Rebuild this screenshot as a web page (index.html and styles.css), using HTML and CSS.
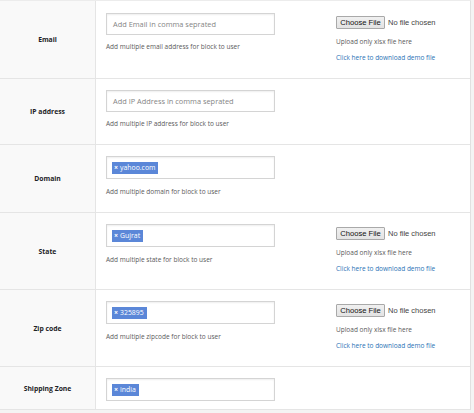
FILE: index.html
```html
<!DOCTYPE html>
<html>
<head>
<meta charset="utf-8">
<link rel="stylesheet" href="styles.css">
</head>
<body>
<div class="table">
  <div class="row row-file row-first">
    <div class="th">Email</div>
    <div class="td">
      <div class="field">
        <div class="input"><span class="ph">Add Email in comma seprated</span></div>
        <p class="help">Add multiple email address for block to user</p>
      </div>
      <div class="file">
        <div class="picker"><span class="btn">Choose File</span><span class="none">No file chosen</span></div>
        <p class="note">Upload only xlsx file here</p>
        <a class="link" href="#">Click here to download demo file</a>
      </div>
    </div>
  </div>
  <div class="row">
    <div class="th">IP address</div>
    <div class="td">
      <div class="field">
        <div class="input"><span class="ph">Add IP Address in comma seprated</span></div>
        <p class="help">Add multiple IP address for block to user</p>
      </div>
    </div>
  </div>
  <div class="row">
    <div class="th">Domain</div>
    <div class="td">
      <div class="field">
        <div class="input input-tags"><span class="tag"><span class="x">×</span>yahoo.com</span></div>
        <p class="help">Add multiple domain for block to user</p>
      </div>
    </div>
  </div>
  <div class="row row-file">
    <div class="th">State</div>
    <div class="td">
      <div class="field">
        <div class="input input-tags"><span class="tag"><span class="x">×</span>Gujrat</span></div>
        <p class="help">Add multiple state for block to user</p>
      </div>
      <div class="file">
        <div class="picker"><span class="btn">Choose File</span><span class="none">No file chosen</span></div>
        <p class="note">Upload only xlsx file here</p>
        <a class="link" href="#">Click here to download demo file</a>
      </div>
    </div>
  </div>
  <div class="row row-file">
    <div class="th">Zip code</div>
    <div class="td">
      <div class="field">
        <div class="input input-tags"><span class="tag"><span class="x">×</span>325895</span></div>
        <p class="help">Add multiple zipcode for block to user</p>
      </div>
      <div class="file">
        <div class="picker"><span class="btn">Choose File</span><span class="none">No file chosen</span></div>
        <p class="note">Upload only xlsx file here</p>
        <a class="link" href="#">Click here to download demo file</a>
      </div>
    </div>
  </div>
  <div class="row row-last">
    <div class="th">Shipping Zone</div>
    <div class="td">
      <div class="field">
        <div class="input input-tags"><span class="tag"><span class="x">×</span>india</span></div>
      </div>
    </div>
  </div>
</div>
</body>
</html>
```
FILE: styles.css
```css
html, body {
  margin: 0;
  padding: 0;
  background: #f4f4f4;
}
body {
  font-family: "Open Sans", "Noto Sans", sans-serif;
  color: #444;
  font-size: 6.5px;
}
.table {
  width: 470px;
  background: #fff;
  border-top: 1px solid #ececec;
  border-right: 1px solid #e1e1e1;
}
.row {
  display: grid;
  grid-template-columns: 96px 1fr;
  border-bottom: 1px solid #e5e5e5;
}
.th {
  background: #f9f9f9;
  border-right: 1px solid #e5e5e5;
  display: flex;
  align-items: center;
  justify-content: center;
  font-weight: 700;
  font-size: 6.8px;
  color: #1d2327;
}
.td {
  display: flex;
  padding: 11px 10px 12px 10px;
}
.row-first .td {
  padding-top: 12px;
}
.row-last .td {
  padding-bottom: 8px;
}
.field {
  width: 230px;
}
.input {
  width: 169px;
  height: 22px;
  box-sizing: border-box;
  border: 1px solid #d4d4d4;
  box-shadow: inset 0 1px 2px rgba(0,0,0,.07);
  background: #fff;
  display: flex;
  align-items: center;
  padding: 0 6px;
}
.input-tags {
  height: 23px;
}
.input-tags + .help {
  margin-top: 5px;
}
.ph {
  color: #858585;
  font-size: 7.4px;
}
.tag {
  display: inline-flex;
  align-items: center;
  height: 12px;
  padding: 0 3px 0 2px;
  margin-left: -1px;
  background: #5b87d8;
  color: #fff;
  font-size: 6.9px;
}
.x {
  font-weight: 700;
  margin-right: 2px;
  font-size: 7px;
}
.help {
  margin: 4px 0 0;
  line-height: 16px;
  color: #5a5a5a;
}
.file {
  padding-top: 2px;
}
.picker {
  display: flex;
  align-items: center;
  height: 14px;
}
.btn {
  box-sizing: border-box;
  width: 49px;
  height: 13px;
  display: inline-flex;
  align-items: center;
  justify-content: center;
  background: linear-gradient(#f0f0f0, #e3e3e3);
  border: 1px solid #a9a9a9;
  border-radius: 1px;
  color: #111;
  font-family: "Liberation Sans", sans-serif;
  font-size: 7.6px;
}
.none {
  margin-left: 3px;
  color: #444;
  font-family: "Liberation Sans", sans-serif;
  font-size: 7.5px;
}
.note {
  margin: 5px 0 0;
  line-height: 16px;
  color: #5a5a5a;
}
.link {
  display: block;
  line-height: 16px;
  color: #2a72b5;
  text-decoration: none;
}
```
